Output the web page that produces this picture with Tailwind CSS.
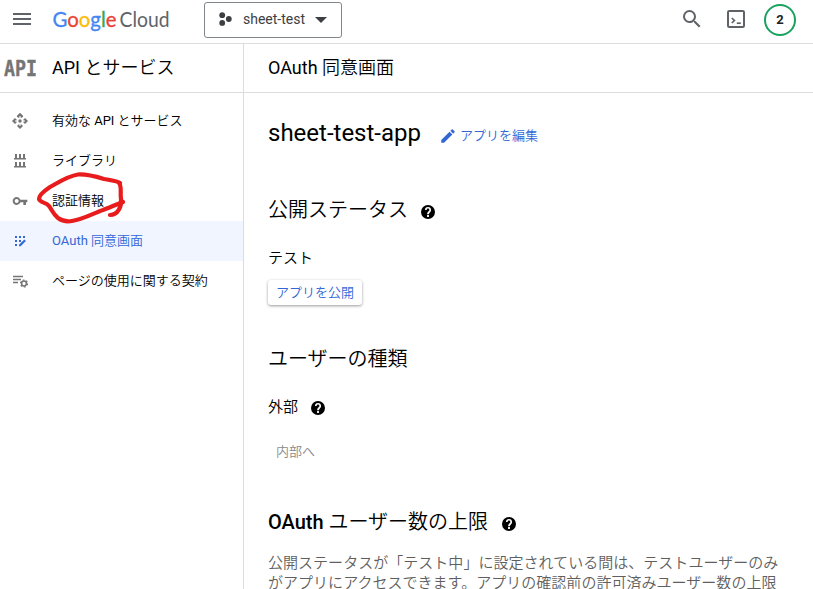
<!doctype html>
<html lang="ja">
  <head>
    <meta charset="UTF-8" />
    <meta name="viewport" content="width=device-width, initial-scale=1.0" />
    <title>OAuth 同意画面 - Google Cloud</title>
    <script src="https://cdn.jsdelivr.net/npm/@tailwindcss/browser@4"></script>
  </head>

  <body
    class="h-screen overflow-hidden bg-white font-[Roboto,'Noto_Sans_CJK_JP',sans-serif] text-black"
  >
    <!-- Header -->
    <header
      class="flex h-11 items-start justify-between border-b border-[#dadce0]"
    >
      <div class="flex">
        <svg class="mt-[7px] ml-2.5 size-6" viewBox="0 0 24 24" fill="#5f6368">
          <path d="M3 18h18v-2H3v2zm0-5h18v-2H3v2zm0-7v2h18V6H3z" />
        </svg>
        <svg class="ml-[18px] h-10 w-[120px]" viewBox="0 0 120 40">
          <g font-family="Lato" font-size="20.5" stroke-width="0.3">
            <text y="26.5" x="0.5" textLength="64" lengthAdjust="spacingAndGlyphs">
              <tspan fill="#4285f4" stroke="#4285f4">G</tspan><tspan fill="#ea4335" stroke="#ea4335">o</tspan><tspan fill="#fbbc04" stroke="#fbbc04">o</tspan><tspan fill="#4285f4" stroke="#4285f4">g</tspan><tspan fill="#34a853" stroke="#34a853">l</tspan><tspan fill="#ea4335" stroke="#ea4335">e</tspan>
            </text>
            <text y="26.5" x="67.5" textLength="50" lengthAdjust="spacingAndGlyphs" fill="#5f6368" stroke="none">Cloud</text>
          </g>
        </svg>
        <button
          class="mt-0.5 ml-8 flex h-9 w-[138px] items-center rounded-[3px] border border-[#80868b] text-sm text-[#3c4043]"
        >
          <svg class="mb-0.5 ml-[14px] h-[14px] w-[13px]" viewBox="0 0 13 14" fill="#3c4043">
            <circle cx="3.2" cy="3.2" r="2.9" />
            <circle cx="3.2" cy="10.9" r="2.9" />
            <circle cx="9.8" cy="7" r="2.9" />
          </svg>
          <span class="mb-0.5 ml-[11px]">sheet-test</span>
          <svg class="ml-[10px] h-1.5 w-3" viewBox="0 0 12 6" fill="#3c4043">
            <path d="M0 0h12L6 6z" />
          </svg>
        </button>
      </div>

      <div class="flex">
        <svg class="mt-[7px] mr-[23px] size-6" viewBox="0 0 24 24" fill="#5f6368">
          <path
            d="M15.5 14h-.79l-.28-.27A6.471 6.471 0 0 0 16 9.5 6.5 6.5 0 1 0 9.500 16c1.610 0 3.090-.59 4.230-1.570l.27.28v.79l5 4.990L20.490 19l-4.990-5zm-6 0C7.010 14 5 11.990 5 9.500S7.010 5 9.500 5 14 7.010 14 9.500 11.990 14 9.500 14z"
          />
        </svg>
        <svg class="mt-2.5 mr-[19px] size-[18px]" viewBox="0 0 18 18" fill="none" stroke="#5f6368">
          <rect x="1" y="1" width="16" height="16" rx="1.2" stroke-width="2" />
          <path d="M4.800 8l2.600 2.500-2.600 2.500" stroke-width="1.700" />
          <path d="M9.800 13.200h4" stroke-width="1.700" />
        </svg>
        <div
          class="mt-1 mr-[17px] flex size-8 items-center justify-center rounded-full border-2 border-[#1aa260] text-[13px] font-bold text-[#202124]"
        >
          2
        </div>
      </div>
    </header>

    <div class="flex">
      <!-- Sidebar -->
      <aside class="h-[545px] w-61 shrink-0 border-r border-[#dadce0]">
        <div class="flex h-[49px] items-center border-b border-[#dadce0]">
          <svg class="ml-1 h-8 w-12" viewBox="0 0 48 32">
            <text x="0" y="24" font-family="DejaVu Sans Mono" font-weight="bold" font-size="22" fill="#757575" stroke="#757575" stroke-width="0.4" textLength="33" lengthAdjust="spacingAndGlyphs">API</text>
          </svg>
          <h2 class="text-lg leading-6 font-[350]"><span class="font-normal">API</span> とサービス</h2>
        </div>

        <nav class="relative pt-2 text-[13px] font-[350]">
          <a href="#" class="flex h-10 items-center">
            <svg class="ml-3 size-4" viewBox="0 0 16 16" fill="#757575">
              <path d="M8 0l3.300 3.300-1.600 1.600L8 3.200 6.300 4.900 4.700 3.300z" />
              <path d="M5 3l3-3 3 3-1.500 1.500h-3z" />
              <path d="M5 13l3 3 3-3-1.500-1.500h-3z" />
              <path d="M3 5L0 8l3 3 1.500-1.500v-3z" />
              <path d="M13 5l3 3-3 3-1.500-1.500v-3z" />
              <circle cx="8" cy="8" r="1.700" />
              <path d="M6.500 4.500L8 3l1.500 1.500zM6.500 11.500L8 13l1.500-1.500zM4.500 6.500L3 8l1.500 1.500zM11.500 6.500L13 8l-1.500 1.500z" fill="#fff" />
            </svg>
            <span class="ml-6">有効な <span class="font-normal">API</span> とサービス</span>
          </a>
          <a href="#" class="flex h-10 items-center">
            <svg class="ml-3 size-4" viewBox="0 0 16 16" fill="#757575">
              <path d="M3 1h2v4h2V1h2v4h2V1h2v4h1v1.500H2V5h1zM3 9h2v4h2V9h2v4h2V9h2v4h1v1.500H2V13h1z" />
            </svg>
            <span class="ml-6">ライブラリ</span>
          </a>
          <a href="#" class="flex h-10 items-center">
            <svg class="ml-3 size-4" viewBox="0 0 24 24" fill="#757575">
              <path d="M12.650 10A5.990 5.990 0 0 0 7 6c-3.310 0-6 2.690-6 6s2.690 6 6 6a5.990 5.990 0 0 0 5.650-4H17v4h4v-4h2v-4H12.650zM7 15c-1.650 0-3-1.350-3-3s1.350-3 3-3 3 1.350 3 3-1.350 3-3 3z" />
            </svg>
            <span class="ml-6">認証情報</span>
          </a>
          <a href="#" class="flex h-10 items-center bg-[#f0f5ff] text-[#3367d6]">
            <svg class="ml-3 size-4" viewBox="0 0 16 16" fill="#3367d6">
              <path d="M3 3h2v2H3zM7 3h2v2H7zM11 3h2v2h-2zM3 7h2v2H3zM7 7h2v2H7zM3 11h2v2H3z" />
              <path d="M7 11.700L12.300 6.400l1.600 1.600-5.300 5.300H7z" />
            </svg>
            <span class="ml-6"><span class="font-normal">OAuth</span> 同意画面</span>
          </a>
          <a href="#" class="flex h-10 items-center">
            <svg class="ml-3 size-4" viewBox="0 0 16 16" fill="none" stroke="#757575">
              <path d="M1 3.500h10M1 6.500h8M1 9.500h5" stroke-width="1.300" />
              <circle cx="12" cy="10.500" r="2.400" stroke-width="1.500" />
              <circle cx="12" cy="10.500" r="3.500" stroke-width="1.200" stroke-dasharray="1.830 1.830" />
            </svg>
            <span class="ml-6">ページの使用に関する契約</span>
          </a>

          <!-- Hand-drawn marker -->
          <svg
            class="pointer-events-none absolute top-[75px] left-[34px] h-[60px] w-24"
            viewBox="34 168 96 60"
            fill="none"
            stroke="#e81c1c"
            stroke-width="4.200"
            stroke-linecap="round"
            stroke-linejoin="round"
          >
            <path d="M120 183C117 181 110 180 104 179C94 176 86 174 78 174.500C68 176 59 182 50 187C44 191 39 196 39 199C40 203 46 202 49 206C52 210 53 214 58 218C62 221 66 222 72 221C84 219 94 213 103 210C111 207 118 204 123 202" />
            <path d="M119 183C122 186 120 192 121 199C122 206 118 215 110 215" />
          </svg>
        </nav>
      </aside>

      <!-- Main Content -->
      <main class="min-w-0 flex-1">
        <div class="flex h-[49px] items-center border-b border-[#dadce0] pl-6">
          <h1 class="text-lg leading-6 font-[350]"><span class="font-normal">OAuth</span> 同意画面</h1>
        </div>

        <div class="pt-6 pl-6">
          <div class="flex h-8 items-center">
            <h2 class="text-2xl">sheet-test-app</h2>
            <a href="#" class="mt-1.5 ml-[18px] flex items-center text-[13px] font-[350] text-[#3367d6]">
              <svg class="size-[18px]" viewBox="0 0 24 24" fill="#3367d6">
                <path d="M3 17.250V21h3.750L17.810 9.940l-3.750-3.750L3 17.250zM20.710 7.040a1 1 0 0 0 0-1.410l-2.340-2.340a1 1 0 0 0-1.410 0l-1.830 1.830 3.750 3.750 1.830-1.830z" />
              </svg>
              <span class="ml-[3px]">アプリを編集</span>
            </a>
          </div>

          <div class="mt-[47px] flex h-7 items-center">
            <h3 class="text-xl font-[350]">公開ステータス</h3>
            <svg class="mt-1 ml-[13px] size-[14px]" viewBox="2 2 20 20">
              <path d="M12 2a10 10 0 1 0 0 20 10 10 0 0 0 0-20zm1.300 17h-2.600v-2.600h2.600V19zm2.500-7.600l-.9.920c-.9.900-1.500 1.680-1.600 2.780h-2.600c0-1.500.6-2.600 1.500-3.500l1.240-1.260c.36-.36.56-.86.560-1.340a2 2 0 0 0-4 0H7.700a4.300 4.300 0 0 1 8.600 0c0 .9-.1 1.800-.5 2.400z" />
            </svg>
          </div>
          <p class="mt-6 text-[15px] leading-5 font-[350]">テスト</p>
          <button class="mt-3 flex h-[25px] w-[94px] items-center justify-center rounded-[3px] text-[13px] font-[350] text-[#3367d6] shadow-[0_1px_3px_rgba(0,0,0,0.4)]">
            アプリを公開
          </button>

          <h3 class="mt-10 text-xl leading-7 font-[350]">ユーザーの種類</h3>
          <div class="mt-6 flex h-5 items-center text-[15px] font-[350]">
            <span>外部</span>
            <svg class="mt-0.5 ml-[13px] size-[14px]" viewBox="2 2 20 20">
              <path d="M12 2a10 10 0 1 0 0 20 10 10 0 0 0 0-20zm1.300 17h-2.600v-2.600h2.600V19zm2.500-7.600l-.9.920c-.9.900-1.500 1.680-1.600 2.780h-2.600c0-1.500.6-2.600 1.500-3.500l1.240-1.260c.36-.36.56-.86.560-1.340a2 2 0 0 0-4 0H7.700a4.300 4.300 0 0 1 8.600 0c0 .9-.1 1.800-.5 2.400z" />
            </svg>
          </div>
          <p class="mt-[25px] pl-2 text-[13px] leading-5 font-[350] text-[#8a8a8a]">内部へ</p>

          <div class="mt-[46px] flex h-7 items-center">
            <h3 class="text-xl font-[350]"><span class="font-medium">OAuth</span> ユーザー数の上限</h3>
            <svg class="mt-1 ml-[14px] size-[14px]" viewBox="2 2 20 20">
              <path d="M12 2a10 10 0 1 0 0 20 10 10 0 0 0 0-20zm1.300 17h-2.600v-2.600h2.600V19zm2.500-7.600l-.9.920c-.9.900-1.500 1.680-1.600 2.780h-2.600c0-1.500.6-2.600 1.500-3.500l1.240-1.260c.36-.36.56-.86.560-1.340a2 2 0 0 0-4 0H7.700a4.300 4.300 0 0 1 8.600 0c0 .9-.1 1.800-.5 2.400z" />
            </svg>
          </div>
          <p class="mt-[17px] text-[15px] leading-5 font-[350] tracking-[0.03px] whitespace-nowrap text-[#5f5f5f]">
            公開ステータスが「テスト中」に設定されている間は、テストユーザーのみ<br />
            がアプリにアクセスできます。アプリの確認前の許可済みユーザー数の上限
          </p>
        </div>
      </main>
    </div>
  </body>
</html>
